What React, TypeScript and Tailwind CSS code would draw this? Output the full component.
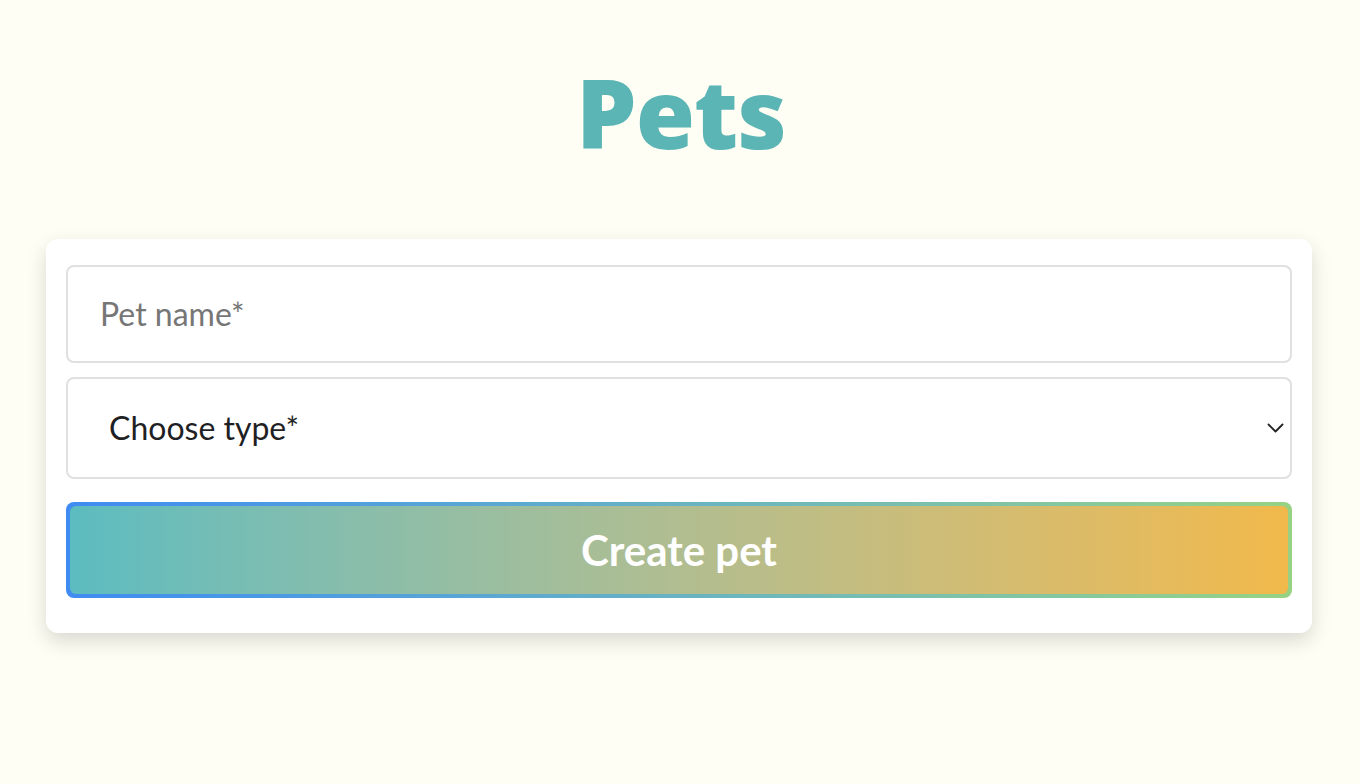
import React from "react";

export default function App() {
  return (
    <div
      className="min-h-[784px] w-full bg-[#fefef5] flex flex-col"
      style={{ fontFamily: '"Lato", "Open Sans", sans-serif' }}
    >
      <h1
        className="mt-[52px] self-center text-[96px] leading-[120px] font-extrabold text-[#5bb5b5] tracking-[-1px] pl-[2px]"
        style={{ fontFamily: '"Open Sans", "Lato", sans-serif' }}
      >
        Pets
      </h1>
      <div className="mt-[67px] ml-[46px] w-[1266px] bg-white rounded-[12px] shadow-[0_8px_20px_rgba(0,0,0,0.15)] px-[20px] pt-[26px] pb-[35px] flex flex-col">
        <div className="h-[98px] border-2 border-[#e0e0e0] rounded-[8px] flex items-center px-[32px]">
          <span className="text-[32px] text-[#767676]">Pet name*</span>
        </div>
        <div className="mt-[14px] h-[102px] border-2 border-[#e0e0e0] rounded-[8px] flex items-center pl-[41px] pr-[6px]">
          <span className="flex-1 text-[32px] text-[#1f1f24]">Choose type*</span>
          <svg width="17" height="10" viewBox="0 0 17 10" fill="none">
            <path d="M1.5 1.5 L8.5 8.5 L15.5 1.5" stroke="#222" strokeWidth="1.8" strokeLinecap="round" strokeLinejoin="round" />
          </svg>
        </div>
        <div className="mt-[23px] rounded-[8px] p-[4px] bg-gradient-to-r from-[#3f8bf2] to-[#97d283]">
          <div className="h-[88px] rounded-[6px] bg-gradient-to-r from-[#5bbcc0] to-[#f1b94a] flex items-center justify-center">
            <span className="text-[42px] font-bold text-white">Create pet</span>
          </div>
        </div>
      </div>
    </div>
  );
}
